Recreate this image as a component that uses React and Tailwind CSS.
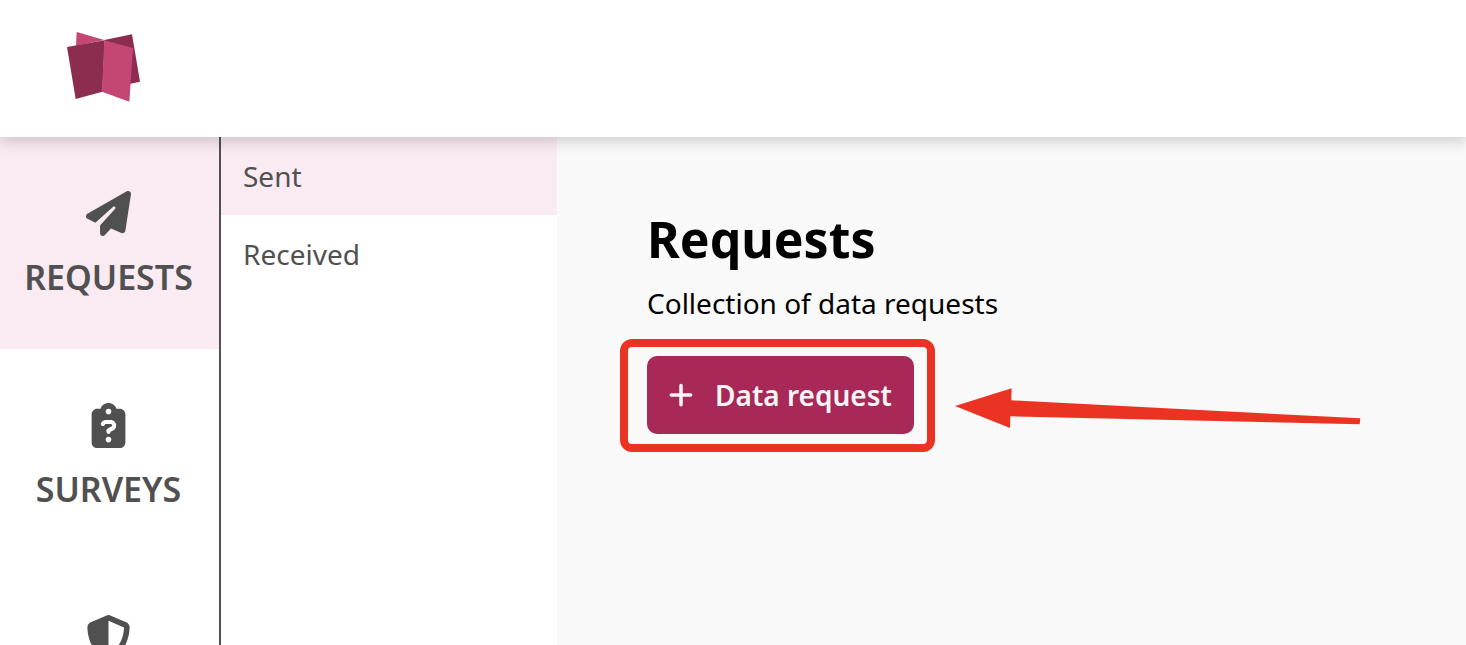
import {
  FaClipboardQuestion,
  FaPaperPlane,
  FaPlus,
  FaShieldHalved,
} from "react-icons/fa6";

const sections = [
  { id: "requests", label: "Requests", icon: FaPaperPlane, active: true },
  { id: "surveys", label: "Surveys", icon: FaClipboardQuestion },
  { id: "policies", icon: FaShieldHalved },
];

const folders = [
  { id: "sent", label: "Sent", active: true },
  { id: "received", label: "Received" },
];

function Logo() {
  return (
    <svg className="h-[70px] w-[74px]" viewBox="48 36 222 210" aria-hidden="true">
      <path d="M80 36 163 60 78 77Z" fill="#c44674" />
      <path d="M163 60 246 43 270 185 235 193Z" fill="#8c2d4f" />
      <path d="M51 81 164 61 157 215 77 237Z" fill="#8c2d4f" />
      <path d="M163 61 249 84 238 245 156 215Z" fill="#c44674" />
    </svg>
  );
}

function Header() {
  return (
    <header className="relative z-10 flex h-[137px] shrink-0 items-start bg-white px-[66px] pt-8 shadow-[0_6px_12px_0_rgba(0,0,0,0.15)]">
      <a href="#home" aria-label="Home">
        <Logo />
      </a>
    </header>
  );
}

function SectionNav() {
  return (
    <nav className="w-[221px] shrink-0 border-r-2 border-[#505050] bg-white">
      {sections.map(({ id, label, icon: Icon, active }) => (
        <a
          key={id}
          href={`#${id}`}
          aria-label={label ?? id}
          aria-current={active ? "page" : undefined}
          className={`flex h-[212px] flex-col items-center pt-[54px] pr-0.5 ${
            active ? "bg-[#faeaf2]" : "bg-white"
          }`}
        >
          <Icon className="size-[45px]" />
          {label ? (
            <span className="mt-4 text-[34px] leading-[50px] font-semibold uppercase">
              {label}
            </span>
          ) : null}
        </a>
      ))}
    </nav>
  );
}

function FolderNav() {
  return (
    <nav className="w-[336px] shrink-0 bg-white">
      {folders.map(({ id, label, active }) => (
        <a
          key={id}
          href={`#${id}`}
          className={`flex h-[78px] items-center px-[22px] text-[28px] leading-10 ${
            active ? "bg-[#faeaf2]" : "bg-white"
          }`}
        >
          {label}
        </a>
      ))}
    </nav>
  );
}

// Marker frame and arrow that point at the call to action
function Callout() {
  return (
    <>
      <div className="pointer-events-none absolute -top-[17px] -right-[21px] -bottom-[18px] -left-[27px] rounded-xl border-8 border-[#ea3323]" />
      <svg
        className="pointer-events-none absolute top-8 left-full ml-[41px] h-10 w-[406px]"
        viewBox="46 53 1218 120"
        aria-hidden="true"
      >
        <path
          d="M46 107 216 54 215 90 1262 144 1260 162 212 138 211 173Z"
          fill="#ea3323"
        />
      </svg>
    </>
  );
}

export default function App() {
  return (
    <div className="flex h-screen flex-col overflow-hidden font-['Noto_Sans',sans-serif] text-[#505050]">
      <Header />
      <div className="flex min-h-0 flex-1">
        <SectionNav />
        <FolderNav />
        <main className="min-w-0 flex-1 bg-[#f9f9f9] px-[90px] pt-[67px] text-black">
          <h1 className="text-[50px] leading-[70px] font-bold">Requests</h1>
          <p className="mt-[9px] text-[28px] leading-10">
            Collection of data requests
          </p>
          <div className="relative mt-[33px] w-fit">
            <button
              type="button"
              className="flex h-[78px] items-center gap-5 rounded-[10px] bg-[#a82857] px-5 pr-[22px] text-[28px] leading-10 font-semibold text-[#f5f5f5]"
            >
              <FaPlus className="size-7" />
              Data request
            </button>
            <Callout />
          </div>
        </main>
      </div>
    </div>
  );
}
